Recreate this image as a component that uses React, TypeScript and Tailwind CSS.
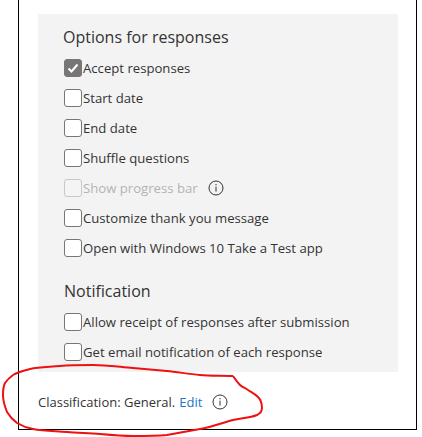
const rowsTop = [
  { label: "Accept responses", checked: true },
  { label: "Start date" },
  { label: "End date" },
  { label: "Shuffle questions" },
  { label: "Show progress bar", disabled: true, info: true },
  { label: "Customize thank you message" },
  { label: "Open with Windows 10 Take a Test app" },
];

const rowsBottom = [
  { label: "Allow receipt of responses after submission" },
  { label: "Get email notification of each response" },
];

type RowProps = {
  label: string;
  checked?: boolean;
  disabled?: boolean;
  info?: boolean;
};

function InfoIcon() {
  return (
    <svg width="16" height="16" viewBox="0 0 16 16" fill="none" className="shrink-0">
      <circle cx="8" cy="8" r="7" stroke="#333" strokeWidth="1" />
      <rect x="7.5" y="4" width="1" height="1.3" fill="#333" />
      <rect x="7.5" y="6.6" width="1" height="5" fill="#333" />
    </svg>
  );
}

function Row({ label, checked, disabled, info }: RowProps) {
  return (
    <div className="flex h-[30px] items-center">
      <div
        className={`flex h-[18px] w-[18px] shrink-0 items-center justify-center rounded-[3px] border ${
          checked
            ? "border-[#767676] bg-[#767676]"
            : disabled
            ? "border-[#c8c8c8] bg-[#f4f4f4]"
            : "border-[#767676] bg-white"
        }`}
      >
        {checked && (
          <svg width="14" height="14" viewBox="0 0 14 14" fill="none">
            <path d="M2.5 7.5 L5.5 10.5 L11.5 3.5" stroke="white" strokeWidth="2" />
          </svg>
        )}
      </div>
      <span className={`ml-[1px] text-[13.15px] leading-[18px] ${disabled ? "text-[#b4b4b4]" : "text-[#333]"}`}>
        {label}
      </span>
      {info && (
        <div className="ml-[10px]">
          <InfoIcon />
        </div>
      )}
    </div>
  );
}

export default function App() {
  return (
    <div className="relative h-[437px] w-[422px] overflow-hidden bg-white font-['Open_Sans','Liberation_Sans',sans-serif]">
      <div className="ml-[18px] h-[430px] w-[399px] border-x border-b border-black pl-[19px] pt-[14px]">
        <div className="h-[358px] w-[360px] bg-[#f3f3f3] pl-[26px] pt-[10px]">
          <h2 className="-ml-[1px] text-[16px] leading-[27px] text-[#333]">Options for responses</h2>
          <div className="mt-[2px]">
            {rowsTop.map((r) => (
              <Row key={r.label} {...r} />
            ))}
          </div>
          <h2 className="mt-[15px] text-[16px] leading-[27px] text-[#333]">Notification</h2>
          <div className="mt-[2px]">
            {rowsBottom.map((r) => (
              <Row key={r.label} {...r} />
            ))}
          </div>
        </div>
        <div className="mt-[21px] flex items-center text-[13px] leading-[18px] text-[#333]">
          <span>Classification: General.</span>
          <span className="ml-[4px] text-[#2176c9]">Edit</span>
          <div className="ml-[10px]">
            <InfoIcon />
          </div>
        </div>
      </div>
      <svg className="absolute left-0 top-0" width="422" height="437" viewBox="0 0 422 437" fill="none">
        <path
          d="M233 376 C222 375.5 210 376 200 375 C188 374 178 372 167 371 C155 370 145 369 133 368 C120 367 106 365 93 365 C82 365 70 365 60 366 C50 367 39 367 30 369 C23 371 18 372 13 375 C9 378 7 380 5 383 C3 387 3 391 3 395 C3 401 5 407 7 412 C10 417 13 420 17 423 C22 426 27 428 33 429 C44 431 56 431 67 432 C78 433 89 433 100 434 C111 435 122 436 133 436 C144 436 156 436 167 435 C178 433 189 431 200 429 C211 427 222 423 233 420 C241 418 250 418 257 415 C261 413 262 411 262 408 C262 404 261 400 258 397 C255 394 251 392 248 390 C245 388 242 387 240 385 C237 382 235 379 233 376"
          stroke="#ee1111"
          strokeWidth="2"
        />
      </svg>
    </div>
  );
}
